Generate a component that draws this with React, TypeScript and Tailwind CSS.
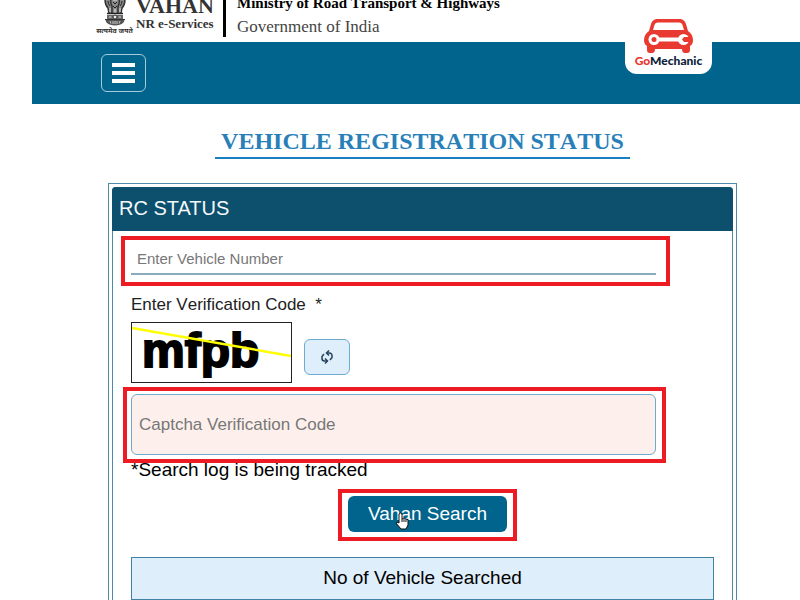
import { useState } from 'react';
import type { ReactNode } from 'react';

function Highlight({ children, inset, className = '' }: { children: ReactNode; inset: string; className?: string }) {
  return (
    <div className={`relative ${className}`}>
      {children}
      <span className={`pointer-events-none absolute border-4 border-[#ed1c24] ${inset}`} />
    </div>
  );
}

function Emblem() {
  return (
    <svg viewBox="0 0 26 28" className="h-7 w-[26px]" fill="none" aria-hidden="true">
      <path d="M3 0q0 6 3 9l1 5h12l1-5q3-3 3-9z" fill="#8a8a8a" />
      <path d="M3 0q0 6 3 9l1 5M23 0q0 6-3 9l-1 5M9 0q-1 4 1 7v7M17 0q1 4-1 7v7" stroke="#333" strokeWidth="1.500" />
      <path d="M6 2q0 3 2 5M20 2q0 3-2 5M11 3l2 2 2-2M11 7l2 2 2-2" stroke="#222" />
      <path d="M12 0v2M14 0v2M13 10v4M8 9v4M18 9v4" stroke="#e4e4e4" />
      <path d="M5 14.500h16" stroke="#222" strokeWidth="1.500" />
      <path d="M5 16h16v4H5z" fill="#666" />
      <circle cx="13" cy="18" r="2" fill="#eee" stroke="#333" />
      <path d="M7 18h2.500M16.500 18H19" stroke="#ddd" />
      <path d="M3 20.500h20" stroke="#333" />
      <path d="M3.500 21h19q-.5 3-4 4.500-5.500 2-11 0-3.500-1.500-4-4.500z" fill="#555" />
      <path d="M8 22l1 2.500M11 22v3M13 22v3M15 22v3M18 22l-1 2.500" stroke="#ccc" />
    </svg>
  );
}

function GoMechanicLogo() {
  return (
    <div className="absolute top-0 right-[88px] flex h-[74px] w-[87px] flex-col items-center rounded-b-xl bg-white pt-[19px]">
      <svg viewBox="0 0 49 34" className="h-[34px] w-[49px]" aria-hidden="true">
        <path
          fill="#e83a30"
          fillRule="evenodd"
          d="M14 0h21c4 0 6 2 7 5l2 7c3 2 5 5 5 9 0 3-1 5-3 6v4q0 3-3 3h-2q-3 0-3-4H11q0 4-3 4H6q-3 0-3-3v-4c-2-1-3-3-3-6 0-4 2-7 5-9l2-7c1-3 3-5 7-5zM14 3.500c-2 0-3 1-3.500 2.500L9 11h31l-1.500-5C38 4.500 37 3.500 35 3.500z"
        />
        <path d="M10 20.500h30" stroke="#fff" strokeWidth="4" />
        <circle cx="10" cy="20.500" r="5.500" fill="#fff" />
        <circle cx="10" cy="20.500" r="2.500" fill="#e83a30" />
        <circle cx="39.500" cy="20.500" r="5.500" fill="#fff" />
        <path d="M46 18h-6l-2 2.500 2 2.500h6z" fill="#e83a30" />
      </svg>
      <span className="font-[Lato,sans-serif] text-xs leading-4 font-black text-[#0b2239]">
        <span className="text-[#e83a30]">Go</span>Mechanic
      </span>
    </div>
  );
}

function Captcha() {
  return (
    <div className="relative flex h-[61px] w-[161px] items-center border border-[#222] bg-white pb-1 pl-2.5">
      <span className="text-5xl leading-none font-bold text-black [-webkit-text-stroke:2px_black]">mfpb</span>
      <svg viewBox="0 0 159 59" className="absolute inset-0 size-full" aria-hidden="true">
        <path d="M0 5l159 28" stroke="#ff0" strokeWidth="2.500" />
      </svg>
    </div>
  );
}

function RefreshIcon() {
  return (
    <svg viewBox="0 0 14 14" className="size-3.5" fill="none" stroke="#24425c" strokeWidth="1.500" aria-hidden="true">
      <path d="M7 3h2.500a2.500 2.500 0 0 1 2.500 2.500v2L10 10M7 11H4.500A2.500 2.500 0 0 1 2 8.500v-2L4 4" />
      <path d="M9 .5L6.500 3 9 5.500M5 8.500L7.500 11 5 13.500" />
    </svg>
  );
}

function HandCursor() {
  return (
    <svg viewBox="0 0 14 18" className="pointer-events-none absolute top-4 left-[47px] h-[18px] w-3.5" aria-hidden="true">
      <path
        d="M4 2q1.500-2 3 0v5q1-1 2 0 1-1 2 .5 1-1 2 .5v5l-2 4H6l-5-6q0-2 3 0z"
        fill="#fff"
        stroke="#111"
      />
      <path d="M7 7v3M9 7.500V10M11 8v2" stroke="#111" />
    </svg>
  );
}

export default function App() {
  const [vehicle, setVehicle] = useState('');
  const [code, setCode] = useState('');

  return (
    <div className="relative flex h-screen flex-col overflow-hidden bg-white font-['Liberation_Sans',Arial,sans-serif] text-black">
      <header className="flex h-[42px] shrink-0 items-end overflow-hidden pb-[3px] pl-[97px] font-['Liberation_Serif',serif]">
        <div className="flex w-[35px] flex-col items-center pb-1">
          <Emblem />
          <span className="font-['Noto_Sans',sans-serif] text-[7px] leading-[8px] font-bold whitespace-nowrap text-[#333]">सत्यमेव जयते</span>
        </div>
        <div className="mb-0.5 ml-1 w-[90px] border-r-[3px] border-black pb-[5px] font-bold text-[#333]">
          <div className="text-[22px] leading-5">VAHAN</div>
          <div className="text-[13px] leading-4">NR e-Services</div>
        </div>
        <div className="ml-[11px]">
          <div className="text-[15px] leading-6 font-bold [font-kerning:none]">Ministry of Road Transport &amp; Highways</div>
          <div className="text-[17px] leading-6 text-[#444]">Government of India</div>
        </div>
      </header>

      <nav className="ml-8 flex h-[62px] shrink-0 items-center bg-[#00648c] pl-[69px]">
        <button type="button" aria-label="Menu" className="flex h-[38px] w-[45px] flex-col items-center justify-center gap-1 rounded-md border border-[#a8cbdc]">
          <span className="h-1 w-[23px] bg-white" />
          <span className="h-1 w-[23px] bg-white" />
          <span className="h-1 w-[23px] bg-white" />
        </button>
      </nav>
      <GoMechanicLogo />

      <main className="mr-[63px] ml-[108px] flex min-h-0 flex-1 flex-col pt-6">
        <h1 className="mx-auto border-b-2 border-[#1b7fbf] px-1.5 pb-[3px] font-['Liberation_Serif',serif] text-2xl leading-[26px] font-bold text-[#2980b9] [font-kerning:none]">
          VEHICLE REGISTRATION STATUS
        </h1>

        <section className="mt-6 min-h-0 flex-1 border border-b-0 border-[#4d8ba8] px-[3px] pt-[3px]">
          <div className="h-full rounded-t border border-b-0 border-[#4d8ba8]">
            <h2 className="-mx-px -mt-px rounded-t bg-[#0c506e] px-[7px] pb-0.5 text-xl leading-[42px] text-[#f4f8fa]">RC STATUS</h2>

            <form className="px-[18px]" onSubmit={e => e.preventDefault()}>
              <Highlight className="mr-[58px] pt-3" inset="-left-2.5 -right-3.5 top-[5px] -bottom-[11px]">
                <input
                  value={vehicle}
                  onChange={e => setVehicle(e.target.value)}
                  aria-label="Enter Vehicle Number"
                  placeholder="Enter Vehicle Number"
                  className="block h-8 w-full border-b-2 border-[#8aabbd] px-1.5 text-[15px] outline-none placeholder:text-[#777]"
                />
              </Highlight>

              <label htmlFor="code" className="mt-[18px] block text-[17px] leading-6 text-[#222] [font-kerning:none]">
                Enter Verification Code&nbsp; *
              </label>
              <div className="mt-[5px] flex items-end gap-3">
                <Captcha />
                <button type="button" aria-label="Refresh code" className="mb-2 flex h-9 w-[46px] items-center justify-center rounded-md border border-[#6fabd0] bg-[#dfeefb]">
                  <RefreshIcon />
                </button>
              </div>

              <Highlight className="mt-[11px] mr-[58px]" inset="-left-2 -right-2.5 -top-[7px] -bottom-2">
                <input
                  id="code"
                  value={code}
                  onChange={e => setCode(e.target.value)}
                  placeholder="Captcha Verification Code"
                  className="block h-[61px] w-full rounded-md border border-[#6fabd0] bg-[#fdf0ec] px-[7px] text-[17px] outline-none placeholder:text-[#777]"
                />
              </Highlight>
              <p className="mt-[3px] text-[19px] leading-6">*Search log is being tracked</p>

              <div className="mt-3.5 flex justify-center pl-2.5">
                <Highlight className="w-[159px]" inset="-inset-x-2.5 -top-[7px] -bottom-[9px]">
                  <button type="submit" className="h-9 w-full rounded-md bg-[#00648c] text-[19px] leading-6 text-white">
                    Vahan Search
                  </button>
                  <HandCursor />
                </Highlight>
              </div>

              <table className="mt-[25px] w-full border border-[#3f82a3] bg-[#dfeefb]">
                <thead>
                  <tr>
                    <th className="h-[42px] text-center text-[19px] font-normal">No of Vehicle Searched</th>
                  </tr>
                </thead>
              </table>
            </form>
          </div>
        </section>
      </main>
    </div>
  );
}
